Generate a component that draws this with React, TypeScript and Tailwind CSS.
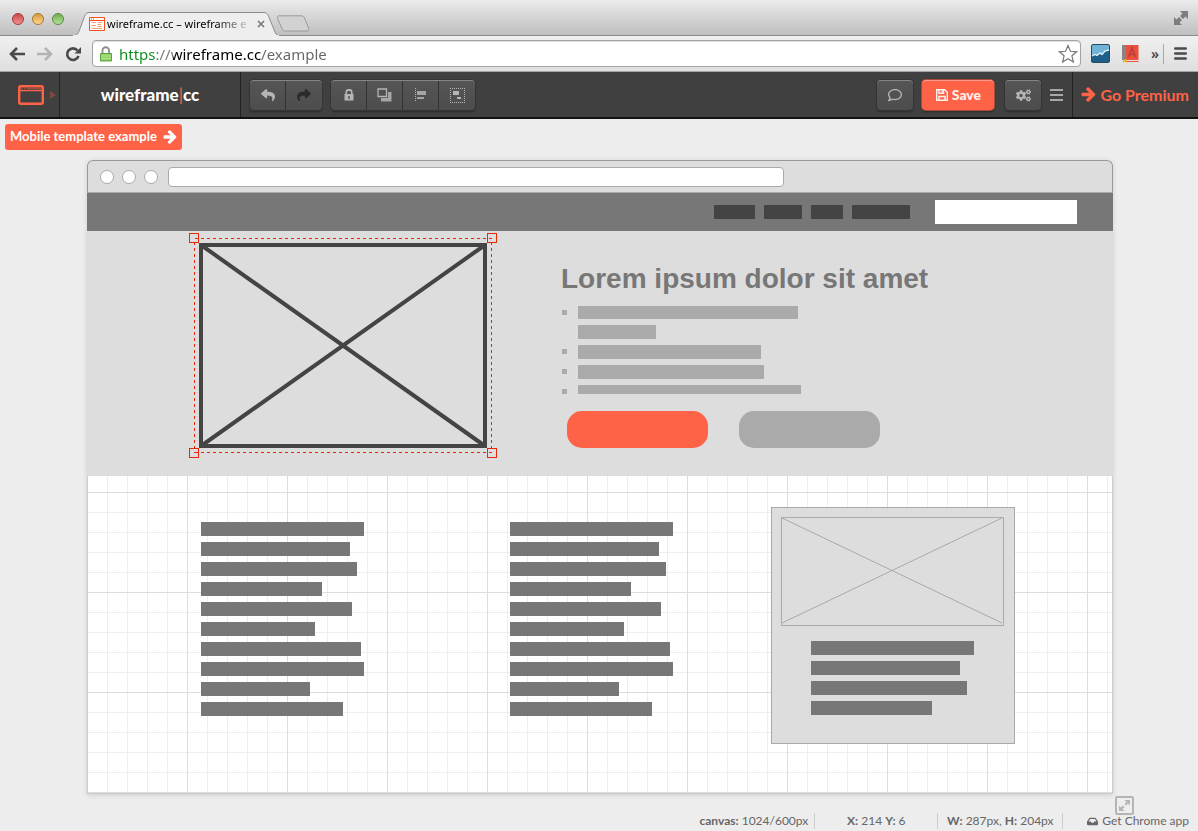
import type { ReactNode } from "react";
import { FaCogs, FaInbox, FaRegComment, FaReply, FaShare } from "react-icons/fa";

const columnBars = [
  "w-[163px]",
  "w-[149px]",
  "w-[156px]",
  "w-[121px]",
  "w-[151px]",
  "w-[114px]",
  "w-[160px]",
  "w-[163px]",
  "w-[109px]",
  "w-[142px]",
];

const bullets = [
  ["h-[13px] w-[220px]", "h-[14px] w-[78px]"],
  ["h-[14px] w-[183px]"],
  ["h-[14px] w-[186px]"],
  ["h-[9px] w-[223px]"],
];

const navBlocks = ["w-[41px]", "w-[38px]", "w-[32px]", "w-[58px]"];

const lights = [
  "border-[#a03a3c] from-[#c9484c] to-[#f58d8d]",
  "border-[#a8762c] from-[#d99a3c] to-[#fbd98a]",
  "border-[#5a8a42] from-[#6fae52] to-[#b4e394]",
];

function ArrowRight({ size }: { size: number }) {
  return (
    <svg className="shrink-0" width={size} height={size} viewBox="-60 160 1600 1600" fill="currentColor">
      <path d="M1472 960q0 54-37 91l-651 651q-39 37-91 37-51 0-90-37l-75-75q-38-38-38-91t38-91l293-293H117q-52 0-84.500-37.500T0 1024V896q0-53 32.500-90.500T117 768h704L528 474q-38-36-38-90t38-90l75-75q38-38 90-38 53 0 91 38l651 651q37 35 37 90z" />
    </svg>
  );
}

function TabStrip() {
  return (
    <div className="flex h-9 items-end border-b border-[#8c8c8c] bg-linear-to-b from-[#ebebeb] to-[#bfbfbf]">
      <div className="flex gap-2 self-center pt-0.5 pl-3">
        {lights.map((color) => (
          <button
            key={color}
            type="button"
            aria-label="Window control"
            className={`size-3 rounded-full border bg-linear-to-b ${color}`}
          />
        ))}
      </div>
      <div className="relative -mb-px ml-2 flex h-6 w-[208px] items-center">
        <svg className="absolute inset-0" width="208" height="24" viewBox="0 0 208 24">
          <path
            d="M0 24C5 23.500 6 22 7.500 18L12.500 4.500C13.500 1.500 15 .5 18 .5H191C194 .5 195.500 1.500 196.500 4L202.500 19C204 22.500 205 23.500 208 24Z"
            fill="#eeeeee"
            stroke="#8c8c8c"
          />
          <path d="M1 23.500H207" stroke="#eeeeee" />
        </svg>
        <svg className="relative ml-[17px] shrink-0" width="16" height="14" viewBox="0 0 16 14">
          <path d="M.5 .5H15.500V13.500H.5Z" fill="#fff" stroke="#f4511e" />
          <path d="M1 3.500H15M2 2h1M4 2h1" stroke="#f4511e" />
          <path d="M2.500 5.500H7M8.500 5.500H13M8.500 7.500H12M2.500 8.500H7M8.500 9.500H13M2.500 11.500H13" stroke="#f79b7d" />
        </svg>
        <span className="relative ml-0.5 w-[146px] bg-linear-to-r from-black from-75% to-transparent bg-clip-text font-['Noto_Sans',sans-serif] text-[11px] whitespace-nowrap text-transparent">
          wireframe.cc – wireframe e
        </span>
        <button type="button" aria-label="Close tab" className="relative ml-1">
          <svg width="8" height="8" viewBox="0 0 8 8">
            <path d="M1 1L7 7M7 1L1 7" stroke="#777" strokeWidth="1.600" />
          </svg>
        </button>
      </div>
      <button type="button" aria-label="New tab" className="-ml-1 self-center pt-3">
        <svg width="34" height="18" viewBox="0 0 34 18">
          <path
            d="M3 .8H25C27 .8 28 1.500 28.600 3L32.500 13C33 15 32.500 16 31 16H10C8 16 7 15.500 6.300 14L1.500 3.500C1 2 1.500 .8 3 .8Z"
            fill="#d2d2d2"
            stroke="#9a9a9a"
          />
        </svg>
      </button>
      <button type="button" aria-label="Full screen" className="mr-2.5 ml-auto self-center">
        <svg width="14" height="14" viewBox="0 0 14 14" fill="#7d7d7d">
          <path d="M6 0H14V8L11.500 5.500L9 8L6 5L8.500 2.500Z" />
          <path d="M0 6L2.500 8.500L5 6L8 9L5.500 11.500L8 14H0Z" />
        </svg>
      </button>
    </div>
  );
}

function AddressBar() {
  return (
    <div className="flex h-9 items-center border-b border-[#a0a5a5] bg-linear-to-b from-[#f0f0f0] to-[#dfdfdf] pr-[11px] pl-2">
      <div className="flex items-center gap-2.5">
        <button type="button" aria-label="Back">
          <svg width="18" height="16" viewBox="0 0 18 16" fill="none" stroke="#4a4a4a" strokeWidth="2.600">
            <path d="M17 8H4M9 2L3 8L9 14" />
          </svg>
        </button>
        <button type="button" aria-label="Forward">
          <svg width="18" height="16" viewBox="0 0 18 16" fill="none" stroke="#b3b3b3" strokeWidth="2.600">
            <path d="M1 8H14M9 2L15 8L9 14" />
          </svg>
        </button>
        <button type="button" aria-label="Reload">
          <svg width="18" height="16" viewBox="0 0 18 16">
            <path d="M13.500 4.500A5.800 5.800 0 1 0 14.500 10" fill="none" stroke="#4a4a4a" strokeWidth="2.600" />
            <path d="M17 1V7.500H10.500Z" fill="#4a4a4a" />
          </svg>
        </button>
      </div>
      <div className="ml-2.5 flex h-[27px] flex-1 items-center rounded-sm border border-[#a3a3a3] bg-white pr-0.5 pl-1.5 shadow-[inset_0_1px_1px_#ddd]">
        <svg width="14" height="16" viewBox="0 0 14 16">
          <path d="M3.500 8V4.500A3.200 3.200 0 0 1 10 4.500V8" fill="none" stroke="#8c8c8c" strokeWidth="1.800" />
          <path d="M1.500 7.500H12.500V15H1.500Z" fill="#8fd165" stroke="#5da33d" />
          <path d="M2 10H12M2 12.500H12" stroke="#b4e594" />
        </svg>
        <input
          aria-label="Address"
          defaultValue="https://wireframe.cc/example"
          className="ml-1.5 min-w-0 flex-1 bg-[linear-gradient(90deg,#0b8a1b_37px,#777_37px,#777_54px,#000_54px,#000_142px,#666_142px)] bg-clip-text font-['Noto_Sans',sans-serif] text-[15px] leading-6 text-transparent outline-none"
        />
        <button type="button" aria-label="Bookmark this page">
          <svg width="20" height="20" viewBox="0 0 20 20">
            <path
              d="M10 1.500L12.400 7.300L18.600 7.800L13.900 11.800L15.400 18L10 14.700L4.600 18L6.100 11.800L1.400 7.800L7.600 7.300Z"
              fill="#fff"
              stroke="#777"
              strokeWidth="1.200"
            />
          </svg>
        </button>
      </div>
      <button type="button" aria-label="Statistics" className="ml-2.5">
        <svg width="19" height="19" viewBox="0 0 19 19">
          <rect x=".5" y=".5" width="18" height="18" rx="1.500" fill="#6fb4d8" stroke="#2b4a5c" />
          <path d="M1 12L4 10.500L6 11.500L9 9L11 10.500L14 7L18 6V18H1Z" fill="#1d5f88" />
          <path d="M1 12L4 10.500L6 11.500L9 9L11 10.500L14 7L18 6" fill="none" stroke="#e4f4fc" strokeWidth="1.300" />
        </svg>
      </button>
      <button type="button" aria-label="Dictionary" className="ml-3">
        <svg width="17" height="19" viewBox="0 0 17 19">
          <path d="M0 1H4V16H0Z" fill="#858585" />
          <path d="M4 1H16.500V16H4Z" fill="#e9503f" />
          <path d="M3 17.500H16.500" stroke="#e9503f" />
          <path d="M1 15.500H5V19L3 17.500L1 19Z" fill="#f3b52f" />
          <path d="M6.500 13L10 4L13.500 13M7.500 10.500H12.500" fill="none" stroke="#b93f33" strokeWidth="1.600" />
        </svg>
      </button>
      <span className="ml-3 font-['Noto_Sans',sans-serif] text-sm font-semibold text-[#444]">»</span>
      <span className="ml-1 h-5 border-l border-[#aaa]" />
      <button type="button" aria-label="Chrome menu" className="ml-2.5">
        <svg width="13" height="13" viewBox="0 0 13 13" stroke="#4a4a4a" strokeWidth="2.600" strokeLinecap="round">
          <path d="M1.300 1.500H11.700M1.300 6.500H11.700M1.300 11.500H11.700" />
        </svg>
      </button>
    </div>
  );
}

function ToolGroup({ children }: { children: ReactNode }) {
  return (
    <div className="flex h-[30px] divide-x divide-[#333] rounded-sm border-t border-[#858585] bg-linear-to-b from-[#555] to-[#4d4d4d] text-[#b5b5b5] shadow-[0_0_0_1px_#363636,0_2px_2px_#2a2a2a]">
      {children}
    </div>
  );
}

function Tool({ label, children }: { label: string; children: ReactNode }) {
  return (
    <button type="button" aria-label={label} className="flex w-9 items-center justify-center">
      {children}
    </button>
  );
}

function Toolbar() {
  return (
    <header className="flex h-[47px] items-center border-b-2 border-[#151111] bg-[#404040] font-[Lato,sans-serif]">
      <button
        type="button"
        aria-label="Template"
        className="flex h-full w-[60px] items-center gap-1.5 border-r border-[#222] pl-[18px]"
      >
        <svg className="shrink-0" width="26" height="20" viewBox="0 0 26 20">
          <rect x="1.200" y="1.200" width="23.600" height="17.600" rx="1.500" fill="none" stroke="#ff6347" strokeWidth="2.400" />
          <path d="M1 5.500H25" stroke="#ff6347" strokeWidth="1.500" />
          <path d="M3 3.500h1.500M6 3.500h1.500M9 3.500h14" stroke="#a04b3b" />
        </svg>
        <svg width="6" height="8" viewBox="0 0 6 8">
          <path d="M0 0L6 4L0 8Z" fill="#7f483d" />
        </svg>
      </button>
      <a
        href="#"
        className="flex h-full w-[181px] items-center justify-center border-r border-[#222] text-[17px] font-black text-white"
      >
        wireframe<span className="font-normal text-[#ff6347]">|</span>cc
      </a>
      <div className="flex gap-[9px] pl-[9px]">
        <ToolGroup>
          <Tool label="Undo">
            <FaReply size={14} />
          </Tool>
          <Tool label="Redo">
            <FaShare size={14} color="#2b2b2b" />
          </Tool>
        </ToolGroup>
        <ToolGroup>
          <Tool label="Lock">
            <svg width="10" height="12" viewBox="0 0 10 12">
              <path d="M2.200 6V3.600A2.700 2.700 0 0 1 7.800 3.600V6" fill="none" stroke="#b5b5b5" strokeWidth="1.700" />
              <rect x=".5" y="5" width="9" height="6.500" fill="#b5b5b5" />
              <path d="M5 7V10" stroke="#505050" strokeWidth="1.400" />
            </svg>
          </Tool>
          <Tool label="Arrange">
            <svg width="15" height="14" viewBox="0 0 15 14">
              <path d="M4 4H14.500V13.500H4Z" fill="#a5a5a5" />
              <path d="M0 0H11V10H0Z" fill="#505050" />
              <path d="M1 1H9.500V8.500H1Z" fill="#505050" stroke="#b5b5b5" strokeWidth="1.300" />
            </svg>
          </Tool>
          <Tool label="Align">
            <svg width="12" height="14" viewBox="0 0 12 14">
              <path d="M.5 0V14" stroke="#b5b5b5" strokeDasharray="1 1" />
              <path d="M2 3H11V7H2ZM2 9H9V11H2Z" fill="#a5a5a5" />
            </svg>
          </Tool>
          <Tool label="Group">
            <svg width="15" height="15" viewBox="0 0 15 15" shapeRendering="crispEdges">
              <path d="M0 .5H15M0 14.500H15M.5 0V15M14.500 0V15" stroke="#b5b5b5" strokeDasharray="1 1" />
              <path d="M3 3H9V7H3ZM7 9H11V11H7Z" fill="#b5b5b5" />
            </svg>
          </Tool>
        </ToolGroup>
      </div>
      <div className="ml-auto flex h-full items-center">
        <ToolGroup>
          <Tool label="Comment">
            <FaRegComment size={14} />
          </Tool>
        </ToolGroup>
        <button
          type="button"
          className="ml-[9px] flex h-[30px] w-[72px] items-center justify-center gap-1 rounded-sm border-t border-[#ff9c8a] bg-[#ff6347] text-sm font-black text-[#fff0ed] shadow-[0_0_0_1px_#a84a3a,0_2px_2px_#2a2a2a]"
        >
          <svg width="12" height="12" viewBox="0 0 12 12" fill="none" stroke="#fff0ed" strokeWidth="1.400">
            <path d="M.7 .7H8.700L11.300 3.300V11.300H.7Z" />
            <path d="M3 11V7.500H9V11M3 1V4.300H7.500V1" />
            <path d="M6.300 1.500V3.500" />
          </svg>
          Save
        </button>
        <div className="ml-[11px]">
          <ToolGroup>
            <Tool label="Settings">
              <FaCogs size={15} />
            </Tool>
          </ToolGroup>
        </div>
        <button type="button" aria-label="Menu" className="mx-[9px] w-[13px]">
          <svg width="13" height="12" viewBox="0 0 13 12" stroke="#a8a8a8" strokeWidth="2">
            <path d="M0 1H13M0 6H13M0 11H13" />
          </svg>
        </button>
        <a
          href="#"
          className="flex h-full items-center gap-1 border-l border-[#222] pr-[9px] pl-2 text-base font-bold text-[#ff6347]"
        >
          <ArrowRight size={15} />
          Go Premium
        </a>
      </div>
    </header>
  );
}

function Bars({ widths }: { widths: string[] }) {
  return (
    <div className="flex flex-col gap-1.5">
      {widths.map((width, i) => (
        <div key={i} className={`h-3.5 bg-[#777] ${width}`} />
      ))}
    </div>
  );
}

function Hero() {
  return (
    <section className="-mx-px flex h-[245px] items-start bg-[#ddd] pl-[102px]">
      {/* Selected image placeholder */}
      <svg className="mt-0.5 shrink-0" width="308" height="225" viewBox="0 0 308 225" fill="none">
        <path d="M12 12L296 213M296 12L12 213" stroke="#444" strokeWidth="4" />
        <rect x="12" y="12" width="284" height="201" stroke="#444" strokeWidth="4" />
        <g stroke="#e8260a" shapeRendering="crispEdges">
          <path d="M6 5.500H303M6 219.500H303M5.500 9V220M302.500 9V220" strokeDasharray="3 3" />
          <path d="M.5 .5h9v9h-9ZM298.500 .5h9v9h-9ZM.5 215.500h9v9h-9ZM298.500 215.500h9v9h-9Z" />
        </g>
      </svg>
      <div className="pt-7 pl-16">
        <h1 className="font-['Liberation_Sans',Arial,sans-serif] text-[28px] leading-10 font-bold whitespace-nowrap text-[#777]">
          Lorem ipsum dolor sit amet
        </h1>
        <ul className="flex flex-col gap-1.5 pt-[7px] pl-px">
          {bullets.map((lines) => (
            <li key={lines[0]} className="flex gap-[11px]">
              <span className="mt-1 size-[5px] bg-[#aaa]" />
              <div className="flex flex-col gap-1.5">
                {lines.map((line) => (
                  <div key={line} className={`bg-[#aaa] ${line}`} />
                ))}
              </div>
            </li>
          ))}
        </ul>
        <div className="flex gap-[31px] pt-[17px] pl-1.5">
          <div className="h-[37px] w-[141px] rounded-[15px] bg-[#ff6347]" />
          <div className="h-[37px] w-[141px] rounded-[15px] bg-[#aaa]" />
        </div>
      </div>
    </section>
  );
}

function Wireframe() {
  return (
    <div className="w-full max-w-[1026px] rounded-t-md shadow-[0_1px_5px_#ccc]">
      <div className="flex h-[33px] items-center gap-2 rounded-t-md border border-[#999] border-b-[#aaa] bg-[#ddd] pl-3">
        <span className="size-3.5 rounded-full border border-[#aaa] bg-white" />
        <span className="size-3.5 rounded-full border border-[#aaa] bg-white" />
        <span className="size-3.5 rounded-full border border-[#aaa] bg-white" />
        <span className="ml-0.5 h-5 w-[616px] rounded-sm border border-[#aaa] bg-white" />
      </div>
      <div className="border-x border-b border-[#ccc] bg-white bg-[linear-gradient(90deg,transparent_99px,#ddd_99px),linear-gradient(transparent_99px,#ddd_99px),linear-gradient(90deg,transparent_19px,#eee_19px),linear-gradient(transparent_19px,#eee_19px)] bg-size-[100px_100px,100px_100px,20px_20px,20px_20px]">
        <div className="-mx-px flex h-[38px] items-center justify-end gap-[9px] bg-[#777] pr-9">
          {navBlocks.map((width) => (
            <div key={width} className={`h-3.5 bg-[#444] ${width}`} />
          ))}
          <div className="ml-4 h-6 w-[142px] bg-white" />
        </div>
        <Hero />
        <section className="flex h-[317px] items-start pt-[31px] pl-[113px]">
          <div className="w-[309px] pt-[15px]">
            <Bars widths={columnBars} />
          </div>
          <div className="w-[261px] pt-[15px]">
            <Bars widths={columnBars} />
          </div>
          <div className="w-[244px] border border-[#aaa] bg-[#ddd] px-[9px] pt-[9px] pb-7">
            <svg width="223" height="109" viewBox="0 0 223 109" fill="none" stroke="#aaa">
              <rect x=".5" y=".5" width="222" height="108" />
              <path d="M1 1L221 106M221 1L1 106" />
            </svg>
            <div className="pt-[15px] pl-[30px]">
              <Bars widths={columnBars.slice(0, 4)} />
            </div>
          </div>
        </section>
      </div>
    </div>
  );
}

function StatusBar() {
  return (
    <footer className="relative mt-auto flex h-5 items-center justify-end pr-[9px] font-[Lato,sans-serif] text-xs text-[#666]">
      <span className="border-r border-[#ccc] pr-1.5">
        <b>canvas:</b> 1024/600px
      </span>
      <span className="w-[123px] border-r border-[#ccc] text-center">
        <b>X:</b> 214 <b>Y:</b> 6
      </span>
      <span className="w-[125px] border-r border-[#ccc] text-center">
        <b>W:</b> 287px, <b>H:</b> 204px
      </span>
      <a href="#" className="ml-6 flex items-center gap-1">
        <FaInbox size={11} />
        Get Chrome app
      </a>
      <button type="button" aria-label="Resize canvas" className="absolute right-16 bottom-4">
        <svg width="19" height="19" viewBox="0 0 19 19">
          <rect x="1" y="1" width="17" height="17" rx="1" fill="#eee" stroke="#b5b5b5" strokeWidth="2" />
          <path d="M9.500 4H15V9.500L13 7.500L11 9.500L9.500 8L11.500 6ZM4 9.500L6 11.500L8 9.500L9.500 11L7.500 13L9.500 15H4Z" fill="#b5b5b5" />
        </svg>
      </button>
    </footer>
  );
}

export default function App() {
  return (
    <div className="flex min-h-screen flex-col bg-[#ededed]">
      <TabStrip />
      <AddressBar />
      <Toolbar />
      <div className="flex px-[5px] pt-[5px]">
        <a
          href="#"
          className="flex h-[26px] items-center gap-1.5 rounded-[3px] bg-[#ff6347] px-[5px] font-[Lato,sans-serif] text-[13px] font-bold text-white"
        >
          Mobile template example
          <ArrowRight size={14} />
        </a>
      </div>
      <main className="flex justify-center pt-2.5 pl-0.5">
        <Wireframe />
      </main>
      <StatusBar />
    </div>
  );
}
